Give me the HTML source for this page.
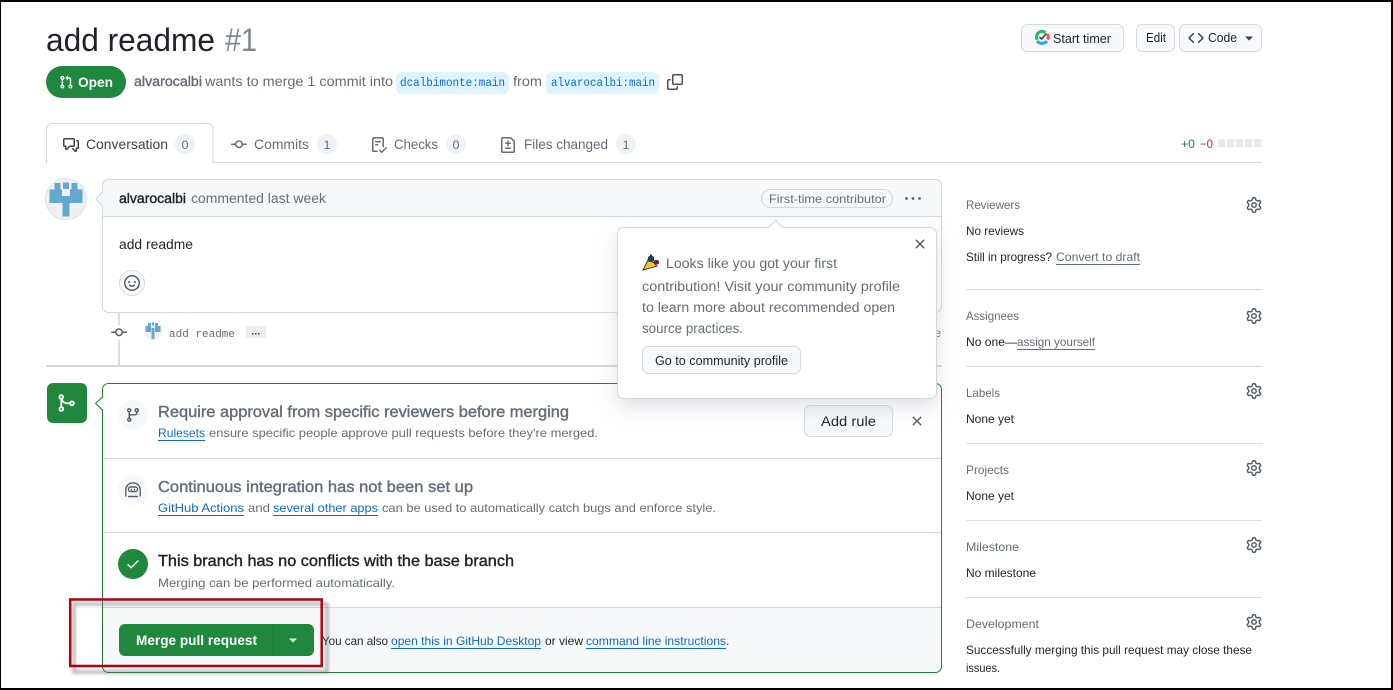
<!DOCTYPE html>
<html lang="en">
<head>
<meta charset="utf-8">
<title>add readme #1</title>
<style>
html,body{margin:0;padding:0;background:#fff;width:1393px;height:690px;overflow:hidden}
svg{display:block}
text{font-family:"Liberation Sans",Arial,sans-serif;fill:#1f2328;font-size:12px}
.m{font-family:"Liberation Mono",monospace}
.g{fill:#656d76}
.b{font-weight:700}
.l{fill:#0969da}
.s{font-size:14px}
.t{font-size:16px}
.sb,.t{stroke:#1f2328;stroke-width:.4px}
.sb.g,.t.g{stroke:#656d76}
.f13{font-size:13px}
.ic{fill:#656d76}
</style>
</head>
<body>
<svg xmlns="http://www.w3.org/2000/svg" width="1393" height="690" viewBox="0 0 1393 690">
<defs>
<filter id="pop" x="-20%" y="-20%" width="140%" height="150%"><feDropShadow dx="0" dy="8" stdDeviation="10" flood-color="#8c959f" flood-opacity=".28"/></filter>
<filter id="rs" x="-10%" y="-20%" width="120%" height="140%"><feGaussianBlur stdDeviation="1.6"/></filter>
<path id="gear" d="M8 0a8.2 8.2 0 0 1 .701.031C9.444.095 9.99.645 10.16 1.29l.288 1.107c.018.066.079.158.212.224.231.114.454.243.668.386.123.082.233.09.299.071l1.103-.303c.644-.176 1.392.021 1.82.63.27.385.506.792.704 1.218.315.675.111 1.422-.364 1.891l-.814.806c-.049.048-.098.147-.088.294.016.257.016.515 0 .772-.01.147.038.246.088.294l.814.806c.475.469.679 1.216.364 1.891a7.977 7.977 0 0 1-.704 1.217c-.428.61-1.176.807-1.82.63l-1.102-.302c-.067-.019-.177-.011-.3.071a5.909 5.909 0 0 1-.668.386c-.133.066-.194.158-.211.224l-.29 1.106c-.168.646-.715 1.196-1.458 1.26a8.006 8.006 0 0 1-1.402 0c-.743-.064-1.289-.614-1.458-1.26l-.289-1.106c-.018-.066-.079-.158-.212-.224a5.738 5.738 0 0 1-.668-.386c-.123-.082-.233-.09-.299-.071l-1.103.303c-.644.176-1.392-.021-1.82-.63a8.12 8.12 0 0 1-.704-1.218c-.315-.675-.111-1.422.363-1.891l.815-.806c.05-.048.098-.147.088-.294a6.214 6.214 0 0 1 0-.772c.01-.147-.038-.246-.088-.294l-.815-.806C.635 6.045.431 5.298.746 4.623a7.92 7.92 0 0 1 .704-1.217c.428-.61 1.176-.807 1.82-.63l1.102.302c.067.019.177.011.3-.071.214-.143.437-.272.668-.386.133-.066.194-.158.211-.224l.29-1.106C6.009.645 6.556.095 7.299.03 7.53.01 7.764 0 8 0Zm-.571 1.525c-.036.003-.108.036-.137.146l-.289 1.105c-.147.561-.549.967-.998 1.189-.173.086-.34.183-.5.29-.417.278-.97.423-1.529.27l-1.103-.303c-.109-.03-.175.016-.195.045-.22.312-.412.644-.573.99-.014.031-.021.11.059.19l.815.806c.411.406.562.957.53 1.456a4.709 4.709 0 0 0 0 .582c.032.499-.119 1.05-.53 1.456l-.815.806c-.081.08-.073.159-.059.19.162.346.353.677.573.989.02.03.085.076.195.046l1.102-.303c.56-.153 1.113-.008 1.53.27.161.107.328.204.501.29.447.222.85.629.997 1.189l.289 1.105c.029.109.101.143.137.146a6.6 6.6 0 0 0 1.142 0c.036-.003.108-.036.137-.146l.289-1.105c.147-.561.549-.967.998-1.189.173-.086.34-.183.5-.29.417-.278.97-.423 1.529-.27l1.103.303c.109.029.175-.016.195-.045.22-.313.411-.644.573-.99.014-.031.021-.11-.059-.19l-.815-.806c-.411-.406-.562-.957-.53-1.456a4.709 4.709 0 0 0 0-.582c-.032-.499.119-1.05.53-1.456l.815-.806c.081-.08.073-.159.059-.19a6.464 6.464 0 0 0-.573-.989c-.02-.03-.085-.076-.195-.046l-1.102.303c-.56.153-1.113.008-1.53-.27a4.44 4.44 0 0 0-.501-.29c-.447-.222-.85-.629-.997-1.189l-.289-1.105c-.029-.11-.101-.143-.137-.146a6.6 6.6 0 0 0-1.142 0ZM11 8a3 3 0 1 1-6 0 3 3 0 0 1 6 0ZM9.5 8a1.5 1.5 0 1 0-3.001.001A1.5 1.5 0 0 0 9.5 8Z"/>
<path id="x" d="M3.72 3.72a.75.75 0 0 1 1.06 0L8 6.94l3.22-3.22a.749.749 0 0 1 1.275.326.749.749 0 0 1-.215.734L9.06 8l3.22 3.22a.749.749 0 0 1-.326 1.275.749.749 0 0 1-.734-.215L8 9.06l-3.22 3.22a.751.751 0 0 1-1.042-.018.751.751 0 0 1-.018-1.042L6.94 8 3.72 4.78a.75.75 0 0 1 0-1.06Z"/>
<path id="commit" d="M11.93 8.5a4.002 4.002 0 0 1-7.86 0H.75a.75.75 0 0 1 0-1.5h3.32a4.002 4.002 0 0 1 7.86 0h3.32a.75.75 0 0 1 0 1.5Zm-1.43-.75a2.5 2.5 0 1 0-5 0 2.5 2.5 0 0 0 5 0Z"/>
</defs>

<rect width="1393" height="690" fill="#fff"/>

<!-- Title -->
<text x="46" y="51" style="font-size:32px" textLength="169" lengthAdjust="spacingAndGlyphs">add readme</text>
<text x="225" y="51" style="font-size:32px;fill:#7d858e" textLength="32" lengthAdjust="spacingAndGlyphs">#1</text>

<!-- Header actions -->
<rect x="1021.5" y="24.5" width="102" height="27" rx="6" fill="#f6f8fa" stroke="#d5dae0"/>
<circle cx="1042" cy="37" r="5.5" fill="none" stroke="#1fb866" stroke-width="3" stroke-dasharray="15 20" transform="rotate(150 1042 37)"/>
<path d="M1037 41a6.500 6.500 0 0 0 10 0" fill="none" stroke="#2da8e6" stroke-width="3"/>
<path d="M1047.300 34a6 6 0 0 1 .5 5.500" fill="none" stroke="#f0564a" stroke-width="3"/>
<path d="M1039.500 37l2 2 5-5.500" fill="none" stroke="#3c4148" stroke-width="1.600"/>
<text x="1053" y="43" class="f13" textLength="58" lengthAdjust="spacingAndGlyphs">Start timer</text>
<rect x="1136.500" y="24.500" width="38" height="27" rx="6" fill="#f6f8fa" stroke="#d5dae0"/>
<text x="1146" y="42" class="f13" textLength="20" lengthAdjust="spacingAndGlyphs">Edit</text>
<rect x="1179.500" y="24.500" width="82" height="27" rx="6" fill="#f6f8fa" stroke="#d5dae0"/>
<path transform="translate(1188 30)" fill="#3b4249" d="m11.28 3.22 4.25 4.25a.75.75 0 0 1 0 1.06l-4.25 4.25a.749.749 0 0 1-1.275-.326.749.749 0 0 1 .215-.734L13.94 8l-3.72-3.72a.749.749 0 0 1 .326-1.275.749.749 0 0 1 .734.215Zm-6.56 0a.751.751 0 0 1 1.042.018.751.751 0 0 1 .018 1.042L2.06 8l3.72 3.72a.749.749 0 0 1-.326 1.275.749.749 0 0 1-.734-.215L.47 8.53a.75.75 0 0 1 0-1.06Z"/>
<text x="1208" y="42" class="f13" textLength="29" lengthAdjust="spacingAndGlyphs">Code</text>
<path d="M1245 36.500h8l-4 4z" fill="#3b4249"/>

<!-- Status line -->
<rect x="46" y="66" width="80" height="32" rx="16" fill="#1f883d"/>
<path transform="translate(59 75) scale(.9)" fill="#fff" d="M1.5 3.25a2.25 2.25 0 1 1 3 2.122v5.256a2.251 2.251 0 1 1-1.5 0V5.372A2.25 2.25 0 0 1 1.5 3.25Zm5.677-.177L9.573.677A.25.25 0 0 1 10 .854V2.5h1A2.5 2.5 0 0 1 13.5 5v5.628a2.251 2.251 0 1 1-1.5 0V5a1 1 0 0 0-1-1h-1v1.646a.25.25 0 0 1-.427.177L7.177 3.427a.25.25 0 0 1 0-.354ZM3.750 2.500a.75.75 0 1 0 0 1.500.75.75 0 0 0 0-1.500Zm0 9.500a.75.75 0 1 0 0 1.500.75.75 0 0 0 0-1.500Zm8.250.750a.75.75 0 1 0 1.500 0 .75.75 0 0 0-1.500 0Z"/>
<text x="78" y="87" class="s b" style="fill:#fff" textLength="35" lengthAdjust="spacingAndGlyphs">Open</text>
<text x="134" y="86" class="s sb g" textLength="68" lengthAdjust="spacingAndGlyphs">alvarocalbi</text>
<text x="205" y="86" class="s g" textLength="188" lengthAdjust="spacingAndGlyphs">wants to merge 1 commit into</text>
<rect x="396" y="72" width="113" height="22" rx="6" fill="#ddf4ff"/>
<text x="400" y="86" class="m l" textLength="105" lengthAdjust="spacingAndGlyphs">dcalbimonte:main</text>
<text x="513" y="86" class="s g" textLength="29" lengthAdjust="spacingAndGlyphs">from</text>
<rect x="546" y="72" width="113" height="22" rx="6" fill="#ddf4ff"/>
<text x="551" y="86" class="m l" textLength="104" lengthAdjust="spacingAndGlyphs">alvarocalbi:main</text>
<g transform="translate(667 74)" fill="#4b535c">
<path d="M0 6.750C0 5.784.784 5 1.750 5h1.500a.75.75 0 0 1 0 1.500h-1.500a.25.25 0 0 0-.25.25v7.500c0 .138.112.25.25.25h7.500a.25.25 0 0 0 .25-.25v-1.500a.75.75 0 0 1 1.500 0v1.500A1.750 1.750 0 0 1 9.250 16h-7.500A1.750 1.750 0 0 1 0 14.250Z"/>
<path d="M5 1.750C5 .784 5.784 0 6.750 0h7.500C15.216 0 16 .784 16 1.750v7.500A1.750 1.750 0 0 1 14.250 11h-7.500A1.750 1.750 0 0 1 5 9.250Zm1.750-.25a.25.25 0 0 0-.25.25v7.500c0 .138.112.25.25.25h7.500a.25.25 0 0 0 .25-.25v-7.500a.25.25 0 0 0-.25-.25Z"/>
</g>

<!-- Tabs -->
<line x1="46" y1="162.500" x2="1262" y2="162.500" stroke="#d0d7de"/>
<path d="M46.500 163V129a5.500 5.500 0 0 1 5.500-5.500h155.500a5.500 5.500 0 0 1 5.500 5.500V163" fill="#fff" stroke="#d0d7de"/>
<path transform="translate(63 137)" fill="#3b4249" d="M1.750 1h8.500c.966 0 1.750.784 1.750 1.750v5.500A1.750 1.750 0 0 1 10.250 10H7.061l-2.574 2.573A1.458 1.458 0 0 1 2 11.543V10h-.25A1.750 1.750 0 0 1 0 8.250v-5.500C0 1.784.784 1 1.750 1ZM1.500 2.750v5.500c0 .138.112.25.25.25h1a.75.75 0 0 1 .75.75v2.190l2.720-2.720a.749.749 0 0 1 .53-.22h3.500a.25.25 0 0 0 .25-.25v-5.500a.25.25 0 0 0-.25-.25h-8.500a.25.25 0 0 0-.25.25Zm13 2a.25.25 0 0 0-.25-.25h-.5a.75.75 0 0 1 0-1.500h.5c.966 0 1.750.784 1.750 1.750v5.500A1.750 1.750 0 0 1 14.250 12H14v1.543a1.458 1.458 0 0 1-2.487 1.030L9.220 12.280a.749.749 0 0 1 .326-1.275.749.749 0 0 1 .734.215l2.220 2.220v-2.190a.75.75 0 0 1 .75-.75h1a.25.25 0 0 0 .25-.25Z"/>
<text x="86" y="149" class="s" textLength="82" lengthAdjust="spacingAndGlyphs" style="fill:#3b4249">Conversation</text>
<rect x="175" y="134" width="20" height="20" rx="10" fill="#eff2f5"/>
<text x="181.500" y="149" class="g" textLength="7" lengthAdjust="spacingAndGlyphs">0</text>
<use href="#commit" transform="translate(231 136.500)" class="ic"/>
<text x="254" y="149" class="s g" textLength="55" lengthAdjust="spacingAndGlyphs">Commits</text>
<rect x="317" y="134" width="20" height="20" rx="10" fill="#eff2f5"/>
<text x="323.500" y="149" class="g" textLength="7" lengthAdjust="spacingAndGlyphs">1</text>
<path transform="translate(371 137)" class="ic" d="M2.500 1.750v11.500c0 .138.112.25.25.25h3.170a.75.75 0 0 1 0 1.500H2.750A1.750 1.750 0 0 1 1 13.250V1.750C1 .784 1.784 0 2.750 0h8.500C12.216 0 13 .784 13 1.750v7.736a.75.75 0 0 1-1.500 0V1.750a.25.25 0 0 0-.25-.25h-8.500a.25.25 0 0 0-.25.25Zm13.274 9.537v-.001l-4.557 4.450a.75.75 0 0 1-1.055-.008l-1.943-1.950a.75.75 0 0 1 1.062-1.058l1.419 1.425 4.026-3.932a.75.75 0 1 1 1.048 1.074ZM4.750 4h4.500a.75.75 0 0 1 0 1.500h-4.500a.75.75 0 0 1 0-1.500ZM4 7.750A.75.75 0 0 1 4.750 7h2a.75.75 0 0 1 0 1.500h-2A.75.75 0 0 1 4 7.750Z"/>
<text x="394" y="149" class="s g" textLength="44" lengthAdjust="spacingAndGlyphs">Checks</text>
<rect x="446" y="134" width="20" height="20" rx="10" fill="#eff2f5"/>
<text x="452.500" y="149" class="g" textLength="7" lengthAdjust="spacingAndGlyphs">0</text>
<path transform="translate(500 137)" class="ic" d="M1 1.750C1 .784 1.784 0 2.750 0h7.586c.464 0 .909.184 1.237.513l2.914 2.914c.329.328.513.773.513 1.237v9.586A1.750 1.750 0 0 1 13.250 16H2.750A1.750 1.750 0 0 1 1 14.250Zm1.750-.25a.25.25 0 0 0-.25.25v12.500c0 .138.112.25.25.25h10.500a.25.25 0 0 0 .25-.25V4.664a.25.25 0 0 0-.073-.177l-2.914-2.914a.25.25 0 0 0-.177-.073ZM8 3.250a.75.75 0 0 1 .75.75v1.500h1.500a.75.75 0 0 1 0 1.500h-1.500v1.500a.75.75 0 0 1-1.500 0V7h-1.500a.75.75 0 0 1 0-1.500h1.500V4A.75.75 0 0 1 8 3.250Zm-3 8a.75.75 0 0 1 .75-.75h4.500a.75.75 0 0 1 0 1.500h-4.500a.75.75 0 0 1-.75-.75Z"/>
<text x="524" y="149" class="s g" textLength="84" lengthAdjust="spacingAndGlyphs">Files changed</text>
<rect x="616" y="134" width="20" height="20" rx="10" fill="#eff2f5"/>
<text x="622.500" y="149" class="g" textLength="7" lengthAdjust="spacingAndGlyphs">1</text>
<text x="1181" y="148" style="fill:#1a7f37" textLength="14" lengthAdjust="spacingAndGlyphs">+0</text>
<text x="1200" y="148" style="fill:#cf222e" textLength="13" lengthAdjust="spacingAndGlyphs">−0</text>
<g fill="#e6e9ed"><rect x="1218" y="139" width="7.500" height="8"/><rect x="1227" y="139" width="7.500" height="8"/><rect x="1236" y="139" width="7.500" height="8"/><rect x="1245" y="139" width="7.500" height="8"/><rect x="1254" y="139" width="7.500" height="8"/></g>

<!-- Avatar -->
<circle cx="66" cy="199" r="20.500" fill="#f0f0f0" stroke="#dfe2e5"/>
<g fill="#62a8d1">
<rect x="49.500" y="189.500" width="12.500" height="13.500"/><rect x="54.500" y="183" width="6" height="7"/>
<rect x="70" y="189.500" width="12.500" height="13.500"/><rect x="71.500" y="183" width="6" height="7"/>
<rect x="62" y="196" width="8" height="7"/><rect x="62.500" y="203" width="7" height="13.500"/><rect x="63" y="182.500" width="6" height="6.500"/>
</g>

<!-- Comment -->
<path d="M102.500 185a5.500 5.500 0 0 1 5.500-5.500h828a5.500 5.500 0 0 1 5.500 5.500v31.500h-839V206l-6.500-7 6.500-7z" fill="#f6f8fa"/>
<rect x="102.500" y="179.500" width="839" height="133" rx="6" fill="none" stroke="#d0d7de"/>
<path d="M102.500 192l-6.500 7 6.500 7" fill="#f6f8fa" stroke="#d0d7de"/>
<rect x="102" y="193" width="2" height="12" fill="#f6f8fa"/>
<line x1="102" y1="216.500" x2="942" y2="216.500" stroke="#d0d7de"/>
<text x="119" y="203" class="s sb" textLength="67" lengthAdjust="spacingAndGlyphs">alvarocalbi</text>
<text x="191" y="203" class="s g" textLength="135" lengthAdjust="spacingAndGlyphs">commented last week</text>
<rect x="761.500" y="189.500" width="131" height="18" rx="9" fill="none" stroke="#d0d7de"/>
<text x="769" y="203" class="g" textLength="117" lengthAdjust="spacingAndGlyphs">First-time contributor</text>
<g fill="#57606a"><circle cx="906.500" cy="198.500" r="1.400"/><circle cx="913" cy="198.500" r="1.400"/><circle cx="919.500" cy="198.500" r="1.400"/></g>
<text x="119" y="249" class="s" textLength="74" lengthAdjust="spacingAndGlyphs">add readme</text>
<circle cx="132" cy="283" r="12.500" fill="#f6f8fa" stroke="#d5dae0"/>
<path transform="translate(124 275)" fill="#57606a" d="M8 0a8 8 0 1 1 0 16A8 8 0 0 1 8 0ZM1.500 8a6.500 6.500 0 1 0 13 0 6.500 6.500 0 0 0-13 0Zm3.820 1.636a.75.75 0 0 1 1.038.175l.007.009c.103.118.22.222.35.31.264.178.683.37 1.285.37.602 0 1.020-.192 1.285-.371.13-.088.247-.192.35-.31l.007-.008a.75.75 0 0 1 1.222.87c-.02.03-.1.14-.2.24-.16.166-.338.316-.53.445-.63.418-1.370.638-2.127.629-.946 0-1.652-.308-2.126-.63a3.331 3.331 0 0 1-.715-.657l-.014-.02a.75.75 0 0 1 .168-1.052ZM12 7a1 1 0 1 1-2 0 1 1 0 0 1 2 0ZM5 8a1 1 0 1 1 0-2 1 1 0 0 1 0 2Z"/>

<!-- Timeline -->
<rect x="118" y="313" width="2" height="52" fill="#d8dee4"/>
<rect x="111" y="325" width="16" height="15" fill="#fff"/>
<use href="#commit" transform="translate(111 324.500)" fill="#57606a"/>
<circle cx="153" cy="331" r="9" fill="#f0f0f0"/>
<g fill="#62a8d1"><rect x="145.500" y="326" width="5.500" height="6"/><rect x="155" y="326" width="5.500" height="6"/><rect x="148" y="323" width="3" height="3"/><rect x="155" y="323" width="3" height="3"/><rect x="152" y="322.500" width="2" height="3"/><rect x="151.500" y="328" width="3" height="11"/></g>
<text x="169" y="337" class="m g" style="font-size:11px" textLength="66" lengthAdjust="spacingAndGlyphs">add readme</text>
<rect x="246" y="326" width="20" height="12" rx="1" fill="#eceff2"/>
<g fill="#3b4249"><rect x="252" y="333" width="1.500" height="1.500"/><rect x="255" y="333" width="1.500" height="1.500"/><rect x="258" y="333" width="1.500" height="1.500"/></g>
<text x="935" y="337" class="g" textLength="6" lengthAdjust="spacingAndGlyphs">e</text>
<rect x="46" y="365" width="896" height="2" fill="#d0d7de"/>

<!-- Merge box -->
<rect x="47" y="383" width="40" height="40" rx="6" fill="#1f883d"/>
<path transform="translate(56 393) scale(1.250)" fill="#fff" d="M5.450 5.154A4.250 4.250 0 0 0 9.250 7.500h1.378a2.251 2.251 0 1 1 0 1.500H9.250A5.734 5.734 0 0 1 5 7.123v3.505a2.250 2.250 0 1 1-1.500 0V5.372a2.250 2.250 0 1 1 1.950-.218ZM4.250 13.500a.75.75 0 1 0 0-1.500.75.75 0 0 0 0 1.500Zm8.500-4.500a.75.75 0 1 0 0-1.500.75.75 0 0 0 0 1.500ZM5 3.250a.75.75 0 1 0-1.500 0 .75.75 0 0 0 1.500 0Z"/>
<path d="M102.500 608v59a5.500 5.500 0 0 0 5.500 5.500h828a5.500 5.500 0 0 0 5.500-5.500v-59z" fill="#f6f8fa"/>
<rect x="102.500" y="383.500" width="839" height="289" rx="6" fill="none" stroke="#1a7f37"/>
<path d="M102.500 397l-7 6.500 7 6.500" fill="#fff" stroke="#1a7f37"/>
<rect x="102" y="398" width="2" height="11" fill="#fff"/>
<g stroke="#d0d7de"><line x1="103" y1="458.500" x2="941" y2="458.500"/><line x1="103" y1="532.500" x2="941" y2="532.500"/><line x1="103" y1="607.500" x2="941" y2="607.500"/></g>

<circle cx="133" cy="415" r="15" fill="#f6f8fa"/>
<path transform="translate(125 407)" fill="#57606a" d="M9.500 3.250a2.250 2.250 0 1 1 3 2.122V6A2.500 2.500 0 0 1 10 8.500H6a1 1 0 0 0-1 1v1.128a2.251 2.251 0 1 1-1.500 0V5.372a2.250 2.250 0 1 1 1.500 0v1.836A2.493 2.493 0 0 1 6 7h4a1 1 0 0 0 1-1v-.628A2.250 2.250 0 0 1 9.500 3.250Zm-6 0a.75.75 0 1 0 1.500 0 .75.75 0 0 0-1.500 0Zm8.250-.75a.75.75 0 1 0 0 1.500.75.75 0 0 0 0-1.500ZM4.250 12a.75.75 0 1 0 0 1.500.75.75 0 0 0 0-1.500Z"/>
<text x="158" y="417" class="t g" textLength="411" lengthAdjust="spacingAndGlyphs">Require approval from specific reviewers before merging</text>
<text x="158" y="437" class="l" textLength="47" lengthAdjust="spacingAndGlyphs">Rulesets</text>
<line x1="158" y1="440.500" x2="205" y2="440.500" stroke="#0969da"/>
<text x="209" y="437" class="g" textLength="389" lengthAdjust="spacingAndGlyphs">ensure specific people approve pull requests before they're merged.</text>
<rect x="804.500" y="405.500" width="88" height="31" rx="6" fill="#f6f8fa" stroke="#d5dae0"/>
<text x="821" y="426" class="s" textLength="55" lengthAdjust="spacingAndGlyphs">Add rule</text>
<use href="#x" transform="translate(909 413)" fill="#57606a"/>

<circle cx="133" cy="490" r="15" fill="#f6f8fa"/>
<g transform="translate(125 482)" fill="none" stroke="#57606a" stroke-width="1.400">
<path d="M.8 14.500V8a7.200 7.200 0 0 1 14.400 0v6.500"/>
<rect x="3.500" y="5" width="9" height="4.500" rx="2"/>
<path d="M3 14.500h10M6 7.200l1 1M10 7.200l-1 1"/>
</g>
<text x="158" y="492" class="t g" textLength="315" lengthAdjust="spacingAndGlyphs">Continuous integration has not been set up</text>
<text x="158" y="512" class="l" textLength="86" lengthAdjust="spacingAndGlyphs">GitHub Actions</text>
<line x1="158" y1="515.500" x2="244" y2="515.500" stroke="#0969da"/>
<text x="248" y="512" class="g" textLength="22" lengthAdjust="spacingAndGlyphs">and</text>
<text x="273" y="512" class="l" textLength="105" lengthAdjust="spacingAndGlyphs">several other apps</text>
<line x1="273" y1="515.500" x2="378" y2="515.500" stroke="#0969da"/>
<text x="382" y="512" class="g" textLength="334" lengthAdjust="spacingAndGlyphs">can be used to automatically catch bugs and enforce style.</text>

<circle cx="133" cy="564" r="15" fill="#1f883d"/>
<path transform="translate(125.500 556.500) scale(.94)" fill="#fff" d="M13.780 4.220a.75.75 0 0 1 0 1.060l-7.250 7.250a.75.75 0 0 1-1.060 0L2.220 9.280a.751.751 0 0 1 .018-1.042.751.751 0 0 1 1.042-.018L6 10.940l6.720-6.720a.75.75 0 0 1 1.060 0Z"/>
<text x="158" y="566" class="t" textLength="356" lengthAdjust="spacingAndGlyphs">This branch has no conflicts with the base branch</text>
<text x="158" y="587" class="g" textLength="237" lengthAdjust="spacingAndGlyphs">Merging can be performed automatically.</text>

<rect x="119" y="624" width="195" height="32" rx="6" fill="#1f883d"/>
<line x1="273.500" y1="624" x2="273.500" y2="656" stroke="#1b7a37"/>
<text x="136" y="645" class="s b" style="fill:#fff" textLength="121" lengthAdjust="spacingAndGlyphs">Merge pull request</text>
<path d="M289 638.500h8l-4 4z" fill="#fff"/>
<text x="322" y="645" textLength="66" lengthAdjust="spacingAndGlyphs">You can also</text>
<text x="391" y="645" class="l" textLength="150" lengthAdjust="spacingAndGlyphs">open this in GitHub Desktop</text>
<line x1="391" y1="648.500" x2="541" y2="648.500" stroke="#0969da"/>
<text x="545" y="645" textLength="38" lengthAdjust="spacingAndGlyphs">or view</text>
<text x="586" y="645" class="l" textLength="140" lengthAdjust="spacingAndGlyphs">command line instructions</text>
<line x1="586" y1="648.500" x2="726" y2="648.500" stroke="#0969da"/>
<text x="726" y="645">.</text>

<!-- Popover -->
<g filter="url(#pop)">
<rect x="617.500" y="227.500" width="319" height="171" rx="6" fill="#fff" stroke="#d0d7de"/>
</g>
<path d="M768 228l7.500-7.500 7.500 7.500" fill="#fff" stroke="#d0d7de"/>
<rect x="769" y="227" width="13" height="2" fill="#fff"/>
<use href="#x" transform="translate(912 236)" fill="#57606a"/>
<path d="M643 270l6-12 8 8z" fill="#f7c331" stroke="#2b2b2b" stroke-width=".9"/>
<rect x="648" y="256" width="6" height="6" rx="2" fill="#16405c"/>
<rect x="650" y="254.500" width="2" height="3" fill="#13324a"/>
<rect x="654" y="260" width="5" height="4.500" rx="2" fill="#6e1f2c"/>
<text x="666" y="268" class="s g" style="font-size:13.500px" textLength="171" lengthAdjust="spacingAndGlyphs">Looks like you got your first</text>
<text x="642" y="291" class="s g" style="font-size:13.500px" textLength="258" lengthAdjust="spacingAndGlyphs">contribution! Visit your community profile</text>
<text x="642" y="312" class="s g" style="font-size:13.500px" textLength="253" lengthAdjust="spacingAndGlyphs">to learn more about recommended open</text>
<text x="642" y="333" class="s g" style="font-size:13.500px" textLength="101" lengthAdjust="spacingAndGlyphs">source practices.</text>
<rect x="642.500" y="346.500" width="158" height="27" rx="6" fill="#f6f8fa" stroke="#d5dae0"/>
<text x="655" y="365" class="f13" textLength="133" lengthAdjust="spacingAndGlyphs">Go to community profile</text>

<!-- Sidebar -->
<text x="966" y="209" class="g" textLength="54" lengthAdjust="spacingAndGlyphs">Reviewers</text>
<use href="#gear" transform="translate(1246 197)" fill="#57606a"/>
<text x="966" y="235" textLength="58" lengthAdjust="spacingAndGlyphs">No reviews</text>
<text x="966" y="261" textLength="86" lengthAdjust="spacingAndGlyphs">Still in progress?</text>
<text x="1056" y="261" class="g" textLength="84" lengthAdjust="spacingAndGlyphs">Convert to draft</text>
<line x1="1056" y1="264.500" x2="1140" y2="264.500" stroke="#656d76"/>
<line x1="966" y1="289.500" x2="1262" y2="289.500" stroke="#d8dee4"/>

<text x="966" y="320" class="g" textLength="53" lengthAdjust="spacingAndGlyphs">Assignees</text>
<use href="#gear" transform="translate(1246 308)" fill="#57606a"/>
<text x="966" y="346" textLength="51" lengthAdjust="spacingAndGlyphs">No one—</text>
<text x="1017" y="346" class="g" textLength="78" lengthAdjust="spacingAndGlyphs">assign yourself</text>
<line x1="1017" y1="349.500" x2="1095" y2="349.500" stroke="#656d76"/>
<line x1="966" y1="366.500" x2="1262" y2="366.500" stroke="#d8dee4"/>

<text x="966" y="397" class="g" textLength="34" lengthAdjust="spacingAndGlyphs">Labels</text>
<use href="#gear" transform="translate(1246 383)" fill="#57606a"/>
<text x="966" y="423" textLength="48" lengthAdjust="spacingAndGlyphs">None yet</text>
<line x1="966" y1="443.500" x2="1262" y2="443.500" stroke="#d8dee4"/>

<text x="966" y="474" class="g" textLength="43" lengthAdjust="spacingAndGlyphs">Projects</text>
<use href="#gear" transform="translate(1246 460)" fill="#57606a"/>
<text x="966" y="500" textLength="48" lengthAdjust="spacingAndGlyphs">None yet</text>
<line x1="966" y1="520.500" x2="1262" y2="520.500" stroke="#d8dee4"/>

<text x="966" y="551" class="g" textLength="53" lengthAdjust="spacingAndGlyphs">Milestone</text>
<use href="#gear" transform="translate(1246 537)" fill="#57606a"/>
<text x="966" y="577" textLength="70" lengthAdjust="spacingAndGlyphs">No milestone</text>
<line x1="966" y1="597.500" x2="1262" y2="597.500" stroke="#d8dee4"/>

<text x="966" y="628" class="g" textLength="73" lengthAdjust="spacingAndGlyphs">Development</text>
<use href="#gear" transform="translate(1246 614)" fill="#57606a"/>
<text x="966" y="654" textLength="286" lengthAdjust="spacingAndGlyphs">Successfully merging this pull request may close these</text>
<text x="966" y="672" textLength="34" lengthAdjust="spacingAndGlyphs">issues.</text>

<!-- Red annotation -->
<rect x="74" y="604" width="253" height="68" fill="none" stroke="#6e6e6e" stroke-opacity=".55" stroke-width="3" filter="url(#rs)"/>
<rect x="70.200" y="599.500" width="251.500" height="66.500" fill="none" stroke="#b5000f" stroke-width="2.500"/>

<!-- Screenshot frame -->
<rect x="0" y="0" width="1393" height="2" fill="#000"/>
<rect x="0" y="688" width="1393" height="2" fill="#000"/>
<rect x="0" y="0" width="1" height="690" fill="#000"/>
<rect x="1391" y="0" width="2" height="690" fill="#000"/>
</svg>
</body>
</html>
